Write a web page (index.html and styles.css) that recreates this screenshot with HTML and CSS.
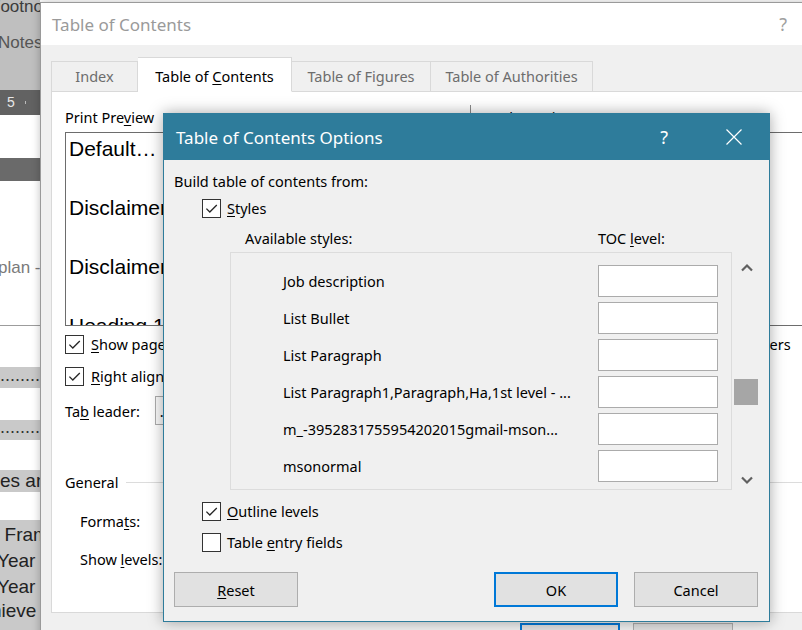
FILE: index.html
```html
<!DOCTYPE html>
<html lang="en">
<head>
<meta charset="UTF-8">
<meta name="viewport" content="width=device-width, initial-scale=1.0">
<title>Table of Contents Options</title>
<link rel="stylesheet" href="styles.css">
</head>
<body>

<div class="screen">

  <!-- Word document behind the dialogs -->
  <div class="doc">
    <div class="ribbon">
      <div class="rb-line rb-1">Footnotes</div>
      <div class="rb-line rb-2">Notes</div>
    </div>
    <div class="ruler"><span>5</span><i></i></div>
    <div class="pg-top"></div>
    <div class="pg-band"></div>
    <div class="pg-plan"><span>plan - Y</span></div>
    <div class="pg-bar bar-1">..............</div>
    <div class="pg-bar bar-2">..............</div>
    <div class="pg-bar bar-3"><span>es and</span></div>
    <div class="pg-block">
      <div class="blk-1">. Framework</div>
      <div class="blk-2">Year 5</div>
      <div class="blk-2">Year 5</div>
      <div class="blk-3">hieve</div>
    </div>
  </div>

  <!-- Table of Contents dialog (inactive, behind) -->
  <div class="toc-dialog">
    <div class="toc-title">
      <span>Table of Contents</span>
      <span class="toc-help">?</span>
    </div>
    <div class="toc-body">
      <div class="tabs">
        <div class="tab tab-index"><span>Index</span></div>
        <div class="tab tab-toc active"><span>Table of <u>C</u>ontents</span></div>
        <div class="tab tab-tof"><span>Table of Figures</span></div>
        <div class="tab tab-toa"><span>Table of Authorities</span></div>
      </div>
      <div class="tab-panel">
        <div class="preview-cols">
          <div class="print-col">
            <div class="col-label">Print Pre<u>v</u>iew</div>
            <div class="preview-box">
              <div class="pv-line">Default…</div>
              <div class="pv-line">Disclaimer</div>
              <div class="pv-line">Disclaimer</div>
              <div class="pv-line">Heading 1</div>
            </div>
            <div class="check first">
              <span class="box"><svg viewBox="0 0 17 17" width="17" height="17"><path d="M3.4 8.6l3.4 3.4 7-7" fill="none" stroke="#262626" stroke-width="1.3"/></svg></span>
              <span><u>S</u>how page numbers</span>
            </div>
            <div class="check second">
              <span class="box"><svg viewBox="0 0 17 17" width="17" height="17"><path d="M3.4 8.6l3.4 3.4 7-7" fill="none" stroke="#262626" stroke-width="1.3"/></svg></span>
              <span><u>R</u>ight align page numbers</span>
            </div>
            <div class="leader-row">
              <span>Ta<u>b</u> leader:</span>
              <div class="select">.......</div>
            </div>
          </div>
          <div class="web-col">
            <div class="col-label">Web Preview</div>
            <div class="preview-box web"></div>
            <div class="check first">
              <span class="box"><svg viewBox="0 0 17 17" width="17" height="17"><path d="M3.4 8.6l3.4 3.4 7-7" fill="none" stroke="#262626" stroke-width="1.3"/></svg></span>
              <span>Use <u>h</u>yperlinks instead of page numbers</span>
            </div>
          </div>
        </div>
        <div class="group-head">
          <span>General</span>
          <div class="rule"></div>
        </div>
        <div class="general-row formats">Forma<u>t</u>s:</div>
        <div class="general-row levels">Show <u>l</u>evels:</div>
      </div>
      <div class="toc-footer">
        <button class="btn default">OK</button>
        <button class="btn">Cancel</button>
      </div>
    </div>
  </div>

  <!-- Table of Contents Options dialog (active) -->
  <div class="opt-dialog">
    <div class="opt-title">
      <span>Table of Contents Options</span>
      <div class="opt-title-btns">
        <span class="opt-help">?</span>
        <svg class="opt-close" viewBox="0 0 16 16" width="16" height="16"><path d="M0.5 0.5l15 15M15.5 0.5l-15 15" stroke="#fff" stroke-width="1.2" fill="none"/></svg>
      </div>
    </div>
    <div class="opt-body">
      <div class="build-label">Build table of contents from:</div>
      <div class="check opt-check styles-check">
        <span class="box"><svg viewBox="0 0 17 17" width="17" height="17"><path d="M3.4 8.6l3.4 3.4 7-7" fill="none" stroke="#262626" stroke-width="1.3"/></svg></span>
        <span><u>S</u>tyles</span>
      </div>
      <div class="styles-head">
        <span class="avail">Available styles:</span>
        <span class="toc-level">TOC <u>l</u>evel:</span>
      </div>
      <div class="styles-area">
        <div class="styles-list">
          <div class="style-row"><span class="style-name">Job description</span><span class="level"></span></div>
          <div class="style-row"><span class="style-name">List Bullet</span><span class="level"></span></div>
          <div class="style-row"><span class="style-name">List Paragraph</span><span class="level"></span></div>
          <div class="style-row"><span class="style-name">List Paragraph1,Paragraph,Ha,1st level - ...</span><span class="level"></span></div>
          <div class="style-row"><span class="style-name">m_-3952831755954202015gmail-mson...</span><span class="level"></span></div>
          <div class="style-row"><span class="style-name">msonormal</span><span class="level"></span></div>
        </div>
        <div class="vscroll">
          <svg class="arrow" viewBox="0 0 12 9" width="12" height="9"><path d="M1 7.5L6 2.5L11 7.5" fill="none" stroke="#606060" stroke-width="2.2"/></svg>
          <div class="track"><div class="thumb"></div></div>
          <svg class="arrow" viewBox="0 0 12 9" width="12" height="9"><path d="M1 1.5L6 6.5L11 1.5" fill="none" stroke="#606060" stroke-width="2.2"/></svg>
        </div>
      </div>
      <div class="check opt-check outline-check">
        <span class="box"><svg viewBox="0 0 17 17" width="17" height="17"><path d="M3.4 8.6l3.4 3.4 7-7" fill="none" stroke="#262626" stroke-width="1.3"/></svg></span>
        <span><u>O</u>utline levels</span>
      </div>
      <div class="check opt-check entry-check">
        <span class="box"></span>
        <span>Table <u>e</u>ntry fields</span>
      </div>
      <div class="opt-buttons">
        <button class="btn"><u>R</u>eset</button>
        <div class="btn-group">
          <button class="btn default">OK</button>
          <button class="btn">Cancel</button>
        </div>
      </div>
    </div>
  </div>

</div>

</body>
</html>
```

FILE: styles.css
```css
* {
  box-sizing: border-box;
}

body {
  margin: 0;
  font-family: "Noto Sans", "Open Sans", sans-serif;
  font-size: 14.5px;
  color: #000;
}

u {
  text-decoration-thickness: 1px;
  text-underline-offset: 2px;
}

.screen {
  position: relative;
  width: 802px;
  height: 630px;
  overflow: hidden;
  background: #fff;
}

/* Word document in the background */
.doc {
  width: 40px;
  height: 630px;
  overflow: hidden;
  white-space: nowrap;
  font-family: "Liberation Sans", Arial, sans-serif;
}

.ribbon {
  display: flow-root;
  height: 90px;
  background: #bfbfbf;
  color: #3c3c3c;
  font-size: 17px;
}

.rb-line {
  line-height: 24px;
}

.rb-1 {
  margin-top: -5px;
  margin-left: -10px;
}

.rb-2 {
  margin-top: 12px;
  margin-left: -2px;
  color: #555;
}

.ruler {
  height: 25px;
  background: #626262;
  color: #e8e8e8;
  font-size: 14px;
  line-height: 25px;
  padding-left: 7px;
  display: flex;
  align-items: center;
  gap: 10px;
}

.ruler i {
  width: 1px;
  height: 3px;
  background: #bbb;
}

.pg-top {
  height: 43px;
}

.pg-band {
  height: 23px;
  background: #6a6a6a;
}

.pg-plan {
  height: 145px;
  padding-top: 76px;
  margin-left: -2px;
  color: #7a7a7a;
  font-size: 17px;
  line-height: 22px;
  border-bottom: 1px solid #9c9c9c;
}

.pg-bar {
  background: #c9c9c9;
  font-size: 18px;
  color: #333;
}

.bar-1 {
  margin-top: 41px;
  height: 21px;
  line-height: 16px;
}

.bar-2 {
  margin-top: 32px;
  height: 20px;
  line-height: 15px;
}

.bar-3 {
  margin-top: 30px;
  height: 22px;
  line-height: 22px;
  color: #222;
  font-size: 19px;
}

.pg-block {
  margin-top: 28px;
  height: 110px;
  background: #c9c9c9;
  color: #222;
  font-size: 19px;
  line-height: 26px;
  padding-top: 2px;
}

.blk-1 {
  margin-left: -6px;
}

.blk-2 {
  margin-left: -3px;
}

.blk-3 {
  margin-left: -9px;
  line-height: 22px;
}

/* Back dialog: Table of Contents */
.toc-dialog {
  position: absolute;
  left: 40px;
  top: 2px;
  width: 800px;
  height: 680px;
  border: 1px solid #9a9a9a;
  background: #f0f0f0;
  box-shadow: 0 0 8px rgba(0, 0, 0, 0.25);
}

.toc-title {
  height: 42px;
  background: #fff;
  color: #9a9a9a;
  font-size: 17px;
  display: flex;
  align-items: center;
  justify-content: space-between;
  padding: 0 52px 0 11px;
}

.toc-help {
  font-size: 18px;
  color: #a0a0a0;
}

.toc-body {
  padding: 12px 0 0 10px;
}

.tabs {
  display: flex;
  align-items: flex-end;
  margin-bottom: -1px;
  position: relative;
  z-index: 1;
}

.tab {
  height: 31px;
  border: 1px solid #d9d9d9;
  border-left: none;
  background: #f0f0f0;
  color: #6d6d6d;
  display: flex;
  align-items: center;
  justify-content: center;
  flex: none;
  padding-bottom: 1px;
}

.tab-index {
  width: 87px;
  border-left: 1px solid #d9d9d9;
}

.tab-toc {
  width: 154px;
}

.tab-tof {
  width: 139px;
}

.tab-toa {
  width: 162px;
}

.tab.active {
  height: 35px;
  background: #fff;
  color: #000;
  border-bottom-color: #fff;
  padding-top: 3px;
}

.tab-panel {
  height: 522px;
  background: #fff;
  border: 1px solid #d9d9d9;
  border-right: none;
  padding: 13px 0 0 13px;
}

.preview-cols {
  display: flex;
}

.print-col {
  width: 405px;
  flex: none;
}

.web-col {
  border-left: 1px solid #8a8a8a;
  padding-left: 17px;
  width: 400px;
  flex: none;
}

.web-col .check {
  padding-left: 2px;
}

.col-label {
  line-height: 20px;
  margin-top: 2px;
}

.preview-box {
  margin-top: 5px;
  width: 391px;
  height: 194px;
  border: 1px solid #6d6d6d;
  overflow: hidden;
  padding: 3px 0 0 3px;
  font-family: "Liberation Sans", Arial, sans-serif;
  font-size: 21px;
  white-space: nowrap;
}

.preview-box.web {
  width: 360px;
}

.pv-line {
  line-height: 26px;
  margin-bottom: 33px;
}

.check {
  display: flex;
  align-items: center;
  gap: 7px;
  height: 20px;
  white-space: nowrap;
}

.check.first {
  margin-top: 8px;
}

.check.second {
  margin-top: 12px;
}

.box {
  width: 19px;
  height: 19px;
  border: 1px solid #333;
  background: #fff;
  flex: none;
}

.box svg {
  display: block;
}

.leader-row {
  margin-top: 10px;
  display: flex;
  align-items: center;
  gap: 15px;
}

.select {
  width: 160px;
  height: 29px;
  border: 1px solid #acacac;
  background: #fafafa;
  padding: 4px 0 0 4px;
}

.group-head {
  margin-top: 47px;
  display: flex;
  align-items: center;
  gap: 8px;
  line-height: 20px;
}

.rule {
  flex: 1;
  height: 1px;
  background: #dcdcdc;
}

.general-row {
  padding-left: 15px;
  line-height: 20px;
}

.formats {
  margin-top: 19px;
}

.levels {
  margin-top: 18px;
}

.toc-footer {
  display: flex;
  gap: 13px;
  padding: 10px 0 0 469px;
}

.toc-footer .btn {
  width: 100px;
}

/* Buttons */
.btn {
  height: 35px;
  background: #e1e1e1;
  border: 1px solid #adadad;
  font-family: inherit;
  font-size: 14.5px;
  color: #000;
  padding: 0;
}

.btn.default {
  border: 2px solid #0078d7;
}

/* Front dialog: Table of Contents Options */
.opt-dialog {
  position: absolute;
  left: 163px;
  top: 113px;
  width: 607px;
  height: 509px;
  border: 1px solid #2e7c9b;
  background: #f0f0f0;
  box-shadow: 0 0 14px rgba(0, 0, 0, 0.35);
}

.opt-title {
  height: 46px;
  background: #2e7c9b;
  color: #fff;
  font-size: 17px;
  display: flex;
  align-items: center;
  justify-content: space-between;
  padding: 0 27px 0 12px;
}

.opt-title-btns {
  display: flex;
  align-items: center;
  gap: 58px;
}

.opt-help {
  font-size: 18px;
}

.opt-body {
  padding: 11px 0 0 10px;
}

.build-label {
  line-height: 20px;
}

.opt-check {
  margin-left: 28px;
  gap: 6px;
}

.styles-check {
  margin-top: 7px;
}

.styles-head {
  margin-top: 10px;
  display: flex;
  line-height: 20px;
}

.avail {
  margin-left: 71px;
  width: 353px;
}

.styles-area {
  margin: 4px 0 0 56px;
  display: flex;
  height: 238px;
}

.styles-list {
  width: 502px;
  flex: none;
  border: 1px solid #dcdcdc;
  padding: 12px 13px 0 52px;
  overflow: hidden;
  display: flex;
  flex-direction: column;
  gap: 5px;
}

.style-row {
  display: flex;
  align-items: center;
  height: 32px;
  flex: none;
}

.style-name {
  flex: 1;
  white-space: nowrap;
}

.level {
  width: 120px;
  height: 32px;
  background: #fff;
  border: 1px solid #ababab;
}

.vscroll {
  width: 30px;
  flex: none;
  display: flex;
  flex-direction: column;
  align-items: center;
  padding: 11px 0 5px;
}

.arrow {
  display: block;
  margin-left: -1px;
}

.track {
  flex: 1;
  width: 100%;
  padding-top: 107px;
  padding-left: 2px;
}

.thumb {
  width: 24px;
  height: 26px;
  background: #a6a6a6;
}

.outline-check {
  margin-top: 11px;
}

.entry-check {
  margin-top: 11px;
}

.opt-buttons {
  margin-top: 20px;
  padding-right: 11px;
  display: flex;
  justify-content: space-between;
}

.opt-buttons .btn {
  width: 124px;
}

.btn-group {
  display: flex;
  gap: 16px;
}
```
